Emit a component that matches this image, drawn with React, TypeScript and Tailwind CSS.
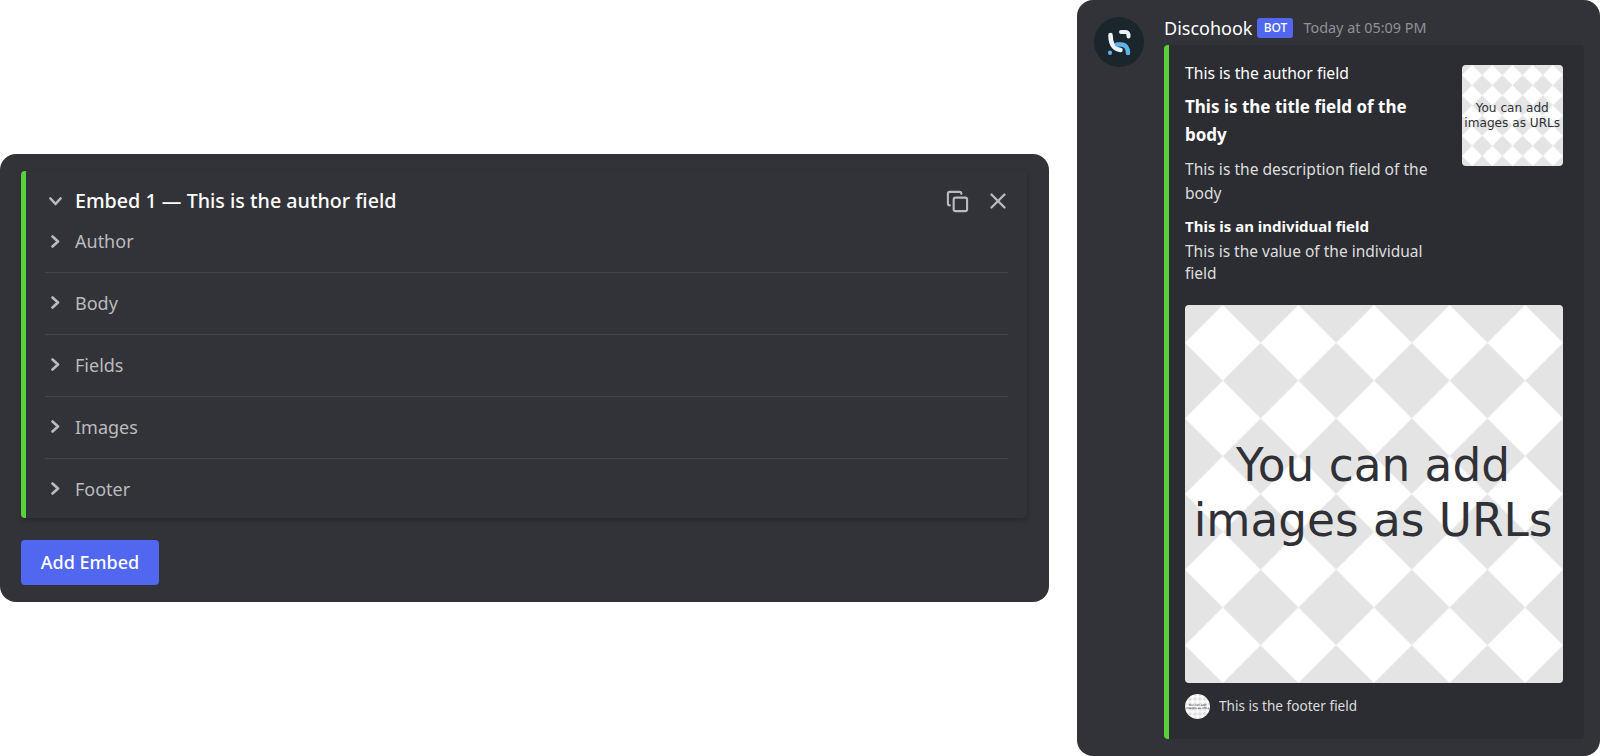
import { Copy, X } from "lucide-react";

const sans = "font-['Noto_Sans',sans-serif]";

function Chevron({ down }: { down?: boolean }) {
  return down ? (
    <svg width="13" height="9" viewBox="0 0 13 9" fill="none" stroke="#b9bbbe" strokeWidth="2.6" strokeLinecap="round" strokeLinejoin="round">
      <path d="M1.500 1.500 6.500 7 11.500 1.500" />
    </svg>
  ) : (
    <svg width="9" height="13" viewBox="0 0 9 13" fill="none" stroke="#b9bbbe" strokeWidth="2.6" strokeLinecap="round" strokeLinejoin="round">
      <path d="M1.500 1.500 7 6.500 1.500 11.500" />
    </svg>
  );
}

function Picture({ id, className }: { id: string; className: string }) {
  return (
    <svg viewBox="0 0 400 400" className={className}>
      <defs>
        <pattern id={id} width="80" height="80" patternUnits="userSpaceOnUse">
          <rect width="80" height="80" fill="#e4e4e4" />
          <polygon points="40,0 80,40 40,80 0,40" fill="#ffffff" />
        </pattern>
      </defs>
      <rect width="400" height="400" fill={`url(#${id})`} />
      <text x="199" y="186" textAnchor="middle" fontFamily="'DejaVu Sans', sans-serif" fontSize="48" fill="#2f3136">You can add</text>
      <text x="199" y="244" textAnchor="middle" fontFamily="'DejaVu Sans', sans-serif" fontSize="48" fill="#2f3136">images as URLs</text>
    </svg>
  );
}

function Logo() {
  return (
    <svg width="50" height="50" viewBox="0 0 50 50" className="shrink-0">
      <circle cx="25" cy="25" r="25" fill="#1b262c" />
      <path d="M27 15h4.500a3 3 0 0 1 3 3v1.500" fill="none" stroke="#e8f4fa" strokeWidth="4" strokeLinecap="round" />
      <path d="M16.500 18c0 9 3 14 10 15" fill="none" stroke="#e8f4fa" strokeWidth="4.500" strokeLinecap="round" />
      <path d="M16 36v-.5" fill="none" stroke="#5db3ee" strokeWidth="4" strokeLinecap="round" />
      <path d="M23 27.500h4c4.500 0 7 3.500 7 8.500" fill="none" stroke="#5db3ee" strokeWidth="4.500" strokeLinecap="round" />
    </svg>
  );
}

const rows = ["Author", "Body", "Fields", "Images", "Footer"];

export default function App() {
  return (
    <div className={`flex h-[756px] w-[1600px] items-center justify-between overflow-hidden bg-white ${sans}`}>
      <div className="w-[1049px] rounded-[16px] bg-[#323338] pt-[17px] pr-[22px] pb-[17px] pl-[21px]">
        <div className="rounded-[4px] border-l-[5px] border-[#58d13d] bg-[#323338] pr-[19px] pl-[19px] shadow-[0_2px_5px_rgba(0,0,0,0.25)]">
          <div className="flex h-[56px] items-start pt-[13px]">
            <div className="flex h-[34px] w-[30px] items-center pl-[4px]">
              <Chevron down />
            </div>
            <div className="text-[19.700px] leading-[34px] font-medium text-white">Embed 1 — This is the author field</div>
            <div className="-mr-[3px] ml-auto flex h-[34px] items-center gap-[16px]">
              <Copy size={23} color="#b9bbbe" strokeWidth={2.2} />
              <X size={26} color="#b9bbbe" strokeWidth={2.2} />
            </div>
          </div>
          {rows.map((r, i) => (
            <div key={r} className={`flex items-start ${i === 0 ? "h-[45.670px]" : i === 4 ? "h-[59.300px] pt-[16px]" : "h-[61.900px] pt-[16px]"} ${i === 4 ? "" : "border-b border-[#43454b]"}`}>
              <div className="flex h-[28px] w-[30px] items-center pl-[6px]">
                <Chevron />
              </div>
              <div className="text-[18px] leading-[28px] text-[#b9bbbe]">{r}</div>
            </div>
          ))}
        </div>
        <button className="mt-[22px] block h-[45px] w-[138px] rounded-[4px] bg-[#5167ef] text-[18px] font-medium text-white">Add Embed</button>
      </div>

      <div className="flex h-[756px] w-[523px] rounded-[16px] bg-[#323338] pt-[17px] pr-[16px] pl-[17px]">
        <Logo />
        <div className="ml-[20px] min-w-0 flex-1">
          <div className="flex h-[28px] items-center pb-[6px]">
            <span className="text-[18px] text-white">Discohook</span>
            <span className="ml-[5px] flex h-[20px] w-[36px] items-center justify-center rounded-[3px] bg-[#5167ef] text-[12px] font-medium text-white">BOT</span>
            <span className="ml-[10px] text-[14.400px] text-[#8e9297]">Today at 05:09 PM</span>
          </div>
          <div className="flex h-[694px] flex-col rounded-[4px] border-l-[5px] border-[#58d13d] bg-[#2c2d32] pl-[16px]">
            <div className="flex w-[378px] justify-between pt-[17px]">
              <div className="w-[255px]">
                <div className="text-[15.700px] leading-[22px] text-white">This is the author field</div>
                <div className="mt-[9px] text-[17px] leading-[28px] font-bold text-white">This is the title field of the body</div>
                <div className="mt-[8px] text-[15.600px] leading-[24px] text-[#dcddde]">This is the description field of the body</div>
                <div className="mt-[10px] text-[15px] leading-[22px] font-bold text-white">This is an individual field</div>
                <div className="mt-[3px] text-[15.500px] leading-[22px] text-[#dcddde]">This is the value of the individual field</div>
              </div>
              <Picture id="thumb" className="mt-[3px] h-[101px] w-[101px] rounded-[4px]" />
            </div>
            <Picture id="main" className="mt-[21px] h-[378px] w-[378px] rounded-[4px]" />
            <div className="mt-[11px] flex items-center gap-[9px]">
              <Picture id="foot" className="h-[25px] w-[25px] rounded-full" />
              <span className="text-[13.600px] text-[#dcddde]">This is the footer field</span>
            </div>
          </div>
        </div>
      </div>
    </div>
  );
}
